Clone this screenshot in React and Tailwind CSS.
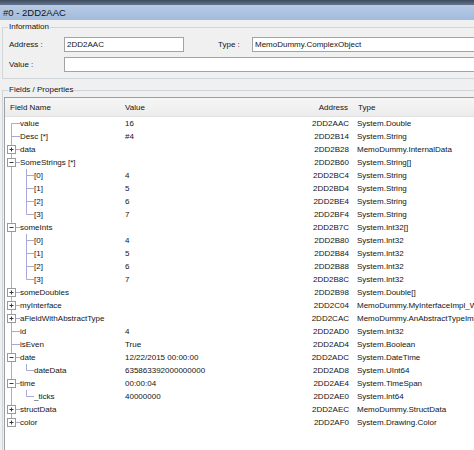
import React from "react";

const rows = [
  { n: "value", v: "16", a: "2DD2AAC", t: "System.Double", l: 0 },
  { n: "Desc [*]", v: "#4", a: "2DD2B14", t: "System.String", l: 0 },
  { n: "data", v: "", a: "2DD2B28", t: "MemoDummy.InternalData", l: 0, box: "plus" },
  { n: "SomeStrings [*]", v: "", a: "2DD2B60", t: "System.String[]", l: 0, box: "minus" },
  { n: "[0]", v: "4", a: "2DD2BC4", t: "System.String", l: 1 },
  { n: "[1]", v: "5", a: "2DD2BD4", t: "System.String", l: 1 },
  { n: "[2]", v: "6", a: "2DD2BE4", t: "System.String", l: 1 },
  { n: "[3]", v: "7", a: "2DD2BF4", t: "System.String", l: 1, lastChild: true },
  { n: "someInts", v: "", a: "2DD2B7C", t: "System.Int32[]", l: 0, box: "minus" },
  { n: "[0]", v: "4", a: "2DD2B80", t: "System.Int32", l: 1 },
  { n: "[1]", v: "5", a: "2DD2B84", t: "System.Int32", l: 1 },
  { n: "[2]", v: "6", a: "2DD2B88", t: "System.Int32", l: 1 },
  { n: "[3]", v: "7", a: "2DD2B8C", t: "System.Int32", l: 1, lastChild: true },
  { n: "someDoubles", v: "", a: "2DD2B98", t: "System.Double[]", l: 0, box: "plus" },
  { n: "myInterface", v: "", a: "2DD2C04", t: "MemoDummy.MyInterfaceImpl_Wrapper", l: 0, box: "plus" },
  { n: "aFieldWithAbstractType", v: "", a: "2DD2CAC", t: "MemoDummy.AnAbstractTypeImplementation", l: 0, box: "plus" },
  { n: "id", v: "4", a: "2DD2AD0", t: "System.Int32", l: 0 },
  { n: "isEven", v: "True", a: "2DD2AD4", t: "System.Boolean", l: 0 },
  { n: "date", v: "12/22/2015 00:00:00", a: "2DD2ADC", t: "System.DateTime", l: 0, box: "minus" },
  { n: "dateData", v: "635863392000000000", a: "2DD2AD8", t: "System.UInt64", l: 1, lastChild: true },
  { n: "time", v: "00:00:04", a: "2DD2AE4", t: "System.TimeSpan", l: 0, box: "minus" },
  { n: "_ticks", v: "40000000", a: "2DD2AE0", t: "System.Int64", l: 1, lastChild: true },
  { n: "structData", v: "", a: "2DD2AEC", t: "MemoDummy.StructData", l: 0, box: "plus" },
  { n: "color", v: "", a: "2DD2AF0", t: "System.Drawing.Color", l: 0, box: "plus", last: true },
];

const LINE = "#a9a9d9";

function Tree({ row, first }) {
  const w = row.l === 0 ? 15 : 29;
  const y0 = first ? 6.5 : 0;
  const y1 = row.last ? 6.5 : 13;
  return (
    <svg width={w} height="13" className="shrink-0" viewBox={`0 0 ${w} 13`}>
      <line x1="6.5" y1={y0} x2="6.5" y2={y1} stroke={LINE} strokeWidth="1" />
      {row.l === 0 ? (
        <line x1="6.5" y1="6.5" x2="15" y2="6.5" stroke={LINE} strokeWidth="1" />
      ) : (
        <>
          <line x1="21.5" y1="0" x2="21.5" y2={row.lastChild ? 6.5 : 13} stroke={LINE} strokeWidth="1" />
          <line x1="21.5" y1="6.5" x2="29" y2="6.5" stroke={LINE} strokeWidth="1" />
        </>
      )}
      {row.box && (
        <>
          <rect x="2.5" y="2.5" width="8" height="8" fill="#ffffff" stroke="#9a9a9a" strokeWidth="1" />
          <line x1="4.5" y1="6.5" x2="8.5" y2="6.5" stroke="#3a3a3a" strokeWidth="1" />
          {row.box === "plus" && (
            <line x1="6.5" y1="4.5" x2="6.5" y2="8.5" stroke="#3a3a3a" strokeWidth="1" />
          )}
        </>
      )}
    </svg>
  );
}

export default function App() {
  return (
    <div
      className="w-[474px] h-[450px] overflow-hidden bg-[#f0f0f0] text-[8px] leading-[13px] text-[#141414]"
      style={{ fontFamily: '"Liberation Sans", Arial, sans-serif' }}
    >
      <div className="h-[5px] bg-gradient-to-b from-[#3e4a5c] to-[#667690]" />
      <div className="h-[15px] bg-gradient-to-b from-[#b7cbe5] to-[#a2bbdb] flex items-center pl-[3px] text-[9.5px]">
        #0 - 2DD2AAC
      </div>
      <div className="w-[560px]">
        <fieldset className="ml-[2px] mt-[1px] border border-[#d0d5d9] pl-[6px] pr-[6px] pt-[4px] pb-[6px]">
          <legend className="px-[1px] leading-[12px] ml-[-1px]">Information</legend>
          <div className="flex items-center h-[15px]">
            <div className="w-[55px]">Address :</div>
            <div className="w-[120px] h-[15px] bg-white border border-[#a3a3a3] pl-[2px] flex items-center">2DD2AAC</div>
            <div className="w-[34px] ml-[34px]">Type :</div>
            <div className="flex-1 h-[15px] bg-white border border-[#a3a3a3] pl-[2px] flex items-center">MemoDummy.ComplexObject</div>
          </div>
          <div className="flex items-center h-[15px] mt-[5px]">
            <div className="w-[55px]">Value :</div>
            <div className="flex-1 h-[15px] bg-white border border-[#a3a3a3]" />
          </div>
        </fieldset>
        <fieldset className="ml-[2px] mt-[5px] border border-[#d0d5d9] pl-[1px] pt-[1px] h-[400px]">
          <legend className="px-[1px] leading-[12px] ml-[4px]">Fields / Properties</legend>
          <div className="bg-white border-l border-t border-[#9aa0a6] h-[380px]">
            <div className="h-[19px] flex items-center bg-gradient-to-b from-[#f6f6f6] to-[#ececec] border-b border-[#e2e2e2]">
              <div className="w-[120px] pl-[5px]">Field Name</div>
              <div className="w-[191px]">Value</div>
              <div className="w-[32px] text-right">Address</div>
              <div className="pl-[10px]">Type</div>
            </div>
            {rows.map((r, i) => (
              <div key={i} className="h-[13px] flex items-center whitespace-nowrap">
                <div className="w-[120px] flex items-center">
                  <Tree row={r} first={i === 0} />
                  <span>{r.n}</span>
                </div>
                <div className="w-[180px]">{r.v}</div>
                <div className="w-[44px] text-right">{r.a}</div>
                <div className="pl-[8px]">{r.t}</div>
              </div>
            ))}
          </div>
        </fieldset>
      </div>
    </div>
  );
}
